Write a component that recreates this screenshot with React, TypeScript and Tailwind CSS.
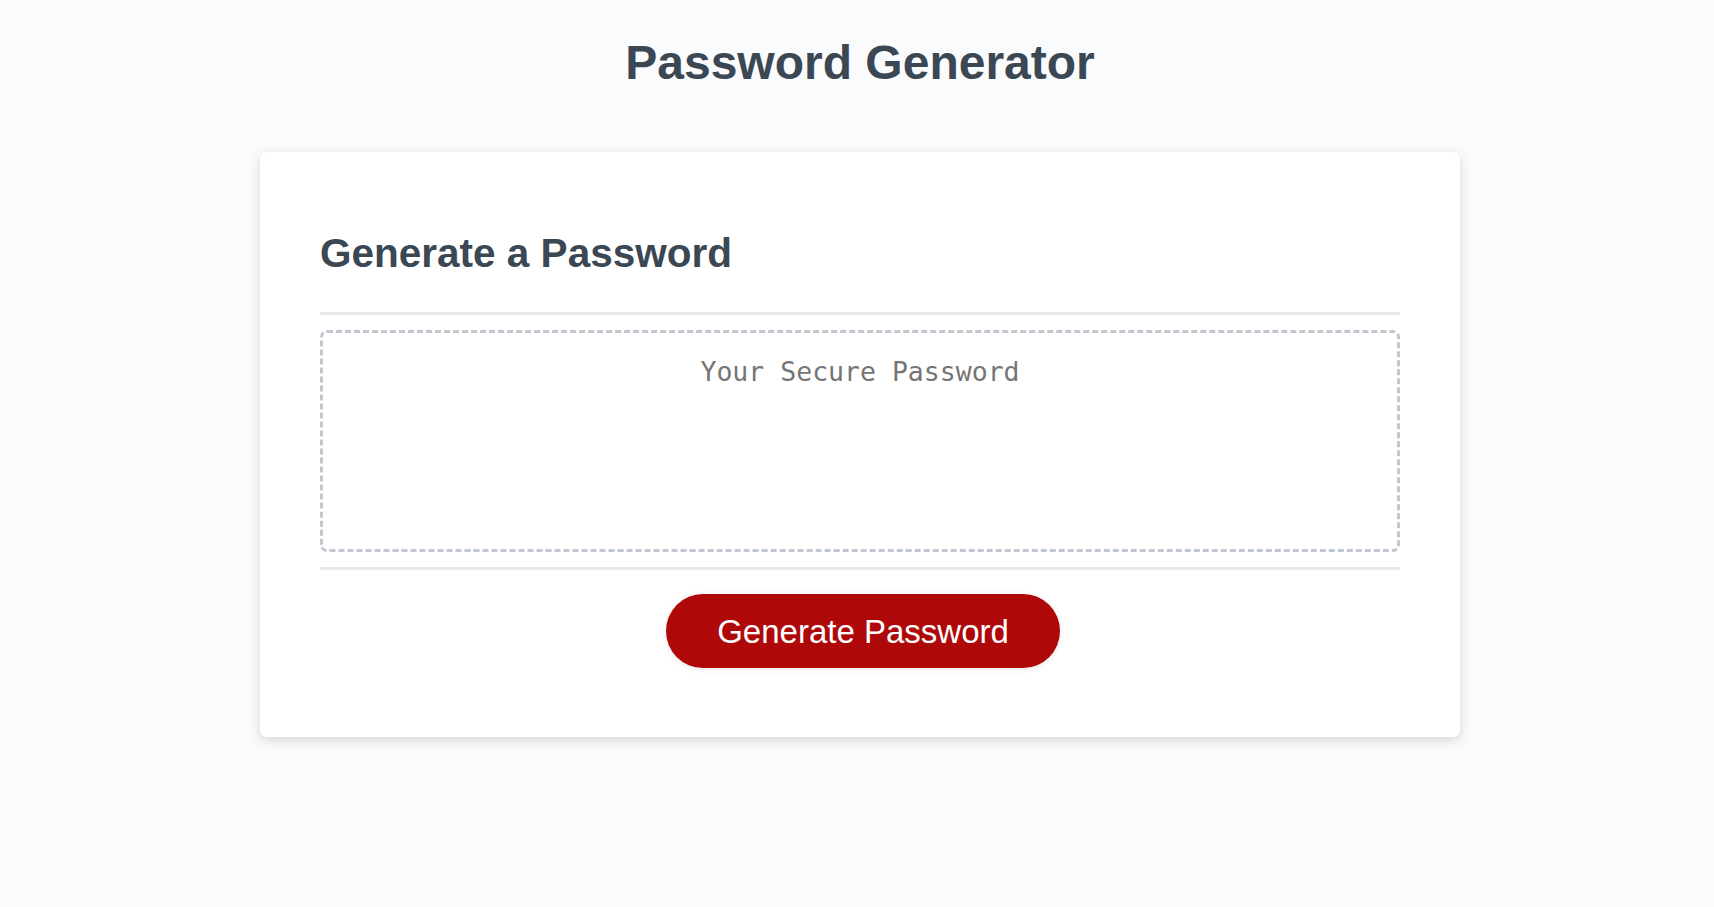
export default function App() {
    return (
        <div className="min-h-screen bg-[#f9fbfd] pl-[6px] font-['Liberation_Sans',Arial,sans-serif] text-[#3b4752]">
            <header className="pt-[35px] text-center">
                <h1 className="text-[48px] font-bold leading-[55px]">Password Generator</h1>
            </header>

            <div className="mx-auto mt-[62px] w-[1200px] rounded-[7px] bg-white px-[60px] pt-[78px] pb-[69px] shadow-[0_3px_12px_rgba(0,0,0,0.15)]">
                <div className="mb-[36px]">
                    <h2 className="text-[40.5px] font-bold leading-[46px]">Generate a Password</h2>
                </div>
                <div className="h-[3px] bg-[#e7e9eb]" />

                <textarea
                    readOnly
                    id="password"
                    placeholder="Your Secure Password"
                    className="mt-[15px] block h-[222px] w-full resize-none rounded-[7px] border-[3px] border-dashed border-[#c0c7cf] px-[15px] pt-[23px] text-center font-['DejaVu_Sans_Mono',monospace] text-[26.5px] leading-[31px] outline-none placeholder:text-[#757575]"
                />

                <div className="mt-[15px] h-[3px] bg-[#e7e9eb]" />
                <div className="mt-[24px] flex justify-center">
                    <button
                        type="button"
                        className="ml-[6px] flex h-[74px] items-center rounded-[37px] bg-[#af0808] px-[51px] text-[33px] leading-[33px] text-white shadow-[0_1px_6px_rgba(0,0,0,0.1)]"
                    >
                        Generate Password
                    </button>
                </div>
            </div>
        </div>
    );
}
